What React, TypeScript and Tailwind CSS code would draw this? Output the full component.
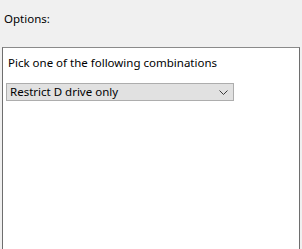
export default function App() {
  return (
    <div className="w-[302px] h-[249px] overflow-hidden bg-[#f0f0f0] text-[11.5px] text-black [font-family:'Noto_Sans','Liberation_Sans',sans-serif]">
      <div className="pl-[4px] pt-[11px] h-[47px] leading-[16px]">Options:</div>
      <div className="ml-[2px] w-[298px] h-[220px] bg-white border border-[#8a8a8a] border-l-[#6e6e6e] border-r-[#6e6e6e] pl-[3px] pt-[6px]">
        <div className="pl-[2px] leading-[17px]">Pick one of the following combinations</div>
        <div className="mt-[12px] w-[228px] h-[18px] bg-[#e1e1e1] border border-[#adadad] flex items-center justify-between pl-[3px] pr-[5px]">
          <span className="leading-[16px]">Restrict D drive only</span>
          <svg width="9" height="6" viewBox="0 0 9 6" className="mt-[1px]">
            <polyline points="0.5,0.5 4.5,4.5 8.5,0.5" fill="none" stroke="#3c3c3c" strokeWidth="1" />
          </svg>
        </div>
      </div>
    </div>
  );
}
